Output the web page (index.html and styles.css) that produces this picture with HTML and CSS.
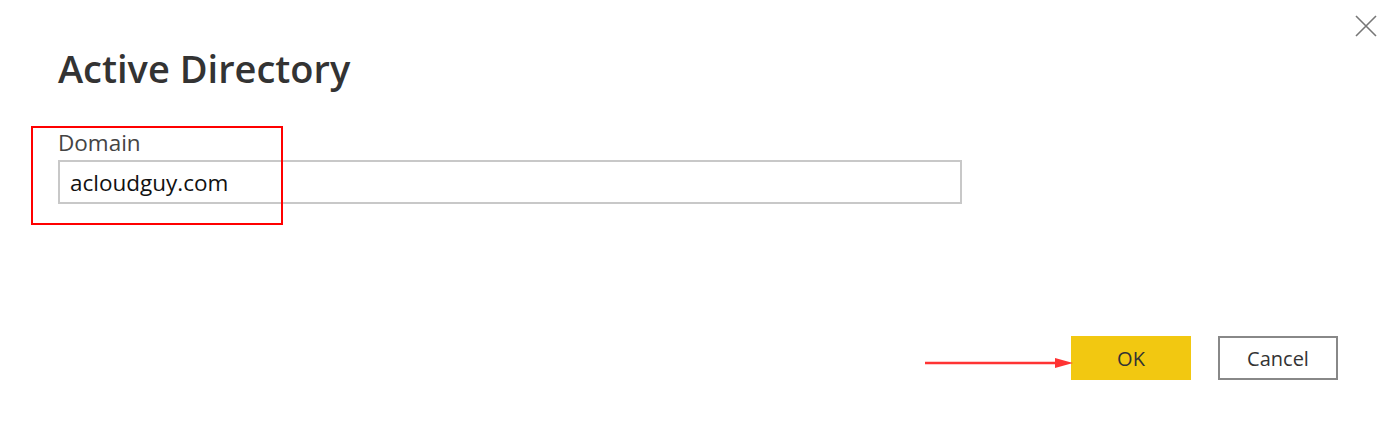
FILE: index.html
```html
<!DOCTYPE html>
<html lang="en">
<head>
  <meta charset="UTF-8">
  <title>Active Directory</title>
  <link rel="stylesheet" href="styles.css">
</head>
<body>
  <div class="dialog">
    <div class="header">
      <h1 class="title">Active Directory</h1>
      <button class="close" aria-label="Close">
        <svg width="22" height="22" viewBox="0 0 22 22"><path d="M1 1L21 21M21 1L1 21" stroke="#777" stroke-width="1.6" fill="none"/></svg>
      </button>
    </div>
    <div class="field">
      <label class="label" for="domain">Domain</label>
      <input class="input" id="domain" type="text" value="acloudguy.com">
      <div class="highlight"></div>
    </div>
    <div class="actions">
      <div class="ok-wrap">
        <svg class="arrow" width="148" height="12" viewBox="0 0 148 12"><path d="M0 6H134" stroke="#f33" stroke-width="2.5"/><path d="M130 1L148 6L130 11Z" fill="#f33"/></svg>
        <button class="btn btn-ok">OK</button>
      </div>
      <button class="btn btn-cancel">Cancel</button>
    </div>
  </div>
</body>
</html>
```

FILE: styles.css
```css
body {
  margin: 0;
  background: #fff;
  font-family: "Open Sans", "Noto Sans", sans-serif;
  color: #333;
}
.dialog {
  width: 1398px;
  height: 438px;
  box-sizing: border-box;
  padding: 14px 21px 0 58px;
}
.header {
  display: flex;
  justify-content: space-between;
  align-items: flex-start;
}
.title {
  margin: 26px 0 0;
  font-size: 38px;
  font-weight: 600;
  line-height: 56px;
  color: #333;
}
.close {
  border: 0;
  background: none;
  padding: 0;
  width: 22px;
  height: 22px;
  margin-top: 1px;
}
.close svg { display: block; }
.field {
  position: relative;
  margin-top: 33px;
  width: 904px;
}
.label {
  display: block;
  font-size: 22.5px;
  line-height: 28px;
  color: #444;
}
.input {
  display: block;
  box-sizing: border-box;
  width: 904px;
  height: 44px;
  margin-top: 3px;
  border: 2px solid #c8c8c8;
  padding: 0 10px;
  font-family: inherit;
  font-size: 22.5px;
  color: #111;
  outline: none;
}
.highlight {
  position: absolute;
  left: -27px;
  top: -3px;
  width: 248px;
  height: 95px;
  border: 2px solid #f00;
}
.actions {
  display: flex;
  justify-content: flex-end;
  gap: 27px;
  margin-top: 132px;
  padding-right: 39px;
}
.ok-wrap { position: relative; }
.arrow {
  position: absolute;
  left: -146px;
  top: 21px;
}
.btn {
  box-sizing: border-box;
  width: 120px;
  height: 44px;
  font-family: inherit;
  font-size: 20px;
  color: #333;
  padding: 0;
}
.btn-ok {
  background: #f2c811;
  border: 0;
}
.btn-cancel {
  background: #fff;
  border: 2px solid #888;
}
```
